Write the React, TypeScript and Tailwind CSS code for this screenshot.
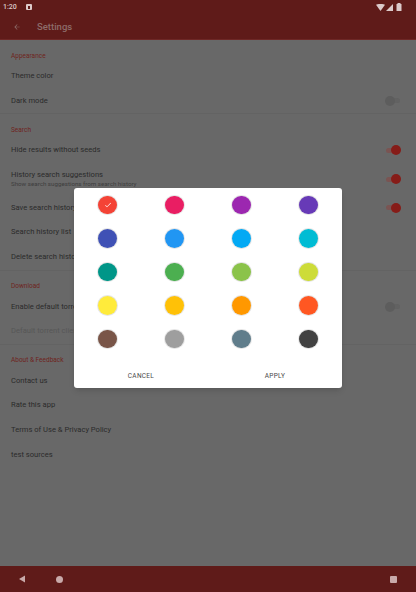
import React from "react";

type Row =
  | { kind: "header"; title: string }
  | { kind: "item"; title: string; summary?: string; toggle?: "on" | "off"; disabled?: boolean }
  | { kind: "divider" };

const rows: Row[] = [
  { kind: "header", title: "Appearance" },
  { kind: "item", title: "Theme color" },
  { kind: "item", title: "Dark mode", toggle: "off" },
  { kind: "divider" },
  { kind: "header", title: "Search" },
  { kind: "item", title: "Hide results without seeds", toggle: "on" },
  { kind: "item", title: "History search suggestions", summary: "Show search suggestions from search history", toggle: "on" },
  { kind: "item", title: "Save search history", toggle: "on" },
  { kind: "item", title: "Search history list" },
  { kind: "item", title: "Delete search history" },
  { kind: "divider" },
  { kind: "header", title: "Download" },
  { kind: "item", title: "Enable default torrent client", toggle: "off" },
  { kind: "item", title: "Default torrent client", disabled: true },
  { kind: "divider" },
  { kind: "header", title: "About & Feedback" },
  { kind: "item", title: "Contact us" },
  { kind: "item", title: "Rate this app" },
  { kind: "item", title: "Terms of Use & Privacy Policy" },
  { kind: "item", title: "test sources" },
];

const colors = [
  "#F44336", "#E91E63", "#9C27B0", "#673AB7",
  "#3F51B5", "#2196F3", "#03A9F4", "#00BCD4",
  "#009688", "#4CAF50", "#8BC34A", "#CDDC39",
  "#FFEB3B", "#FFC107", "#FF9800", "#FF5722",
  "#795548", "#9E9E9E", "#607D8B", "#424242",
];

function Toggle({ on }: { on: boolean }) {
  return (
    <div className="relative w-[16px] h-[10px] flex items-center">
      <div className={`w-[14px] h-[5px] rounded-full ml-[1px] ${on ? "bg-[#7a5452]" : "bg-[#626262]"}`} />
      <div
        className={`absolute top-0 w-[10px] h-[10px] rounded-full ${
          on ? "right-0 bg-[#861c18]" : "left-0 bg-[#5d5d5d]"
        }`}
      />
    </div>
  );
}

function SettingsRow({ row }: { row: Row }) {
  if (row.kind === "divider") return <div className="h-px bg-[#636363]" />;
  if (row.kind === "header")
    return (
      <div className="h-[23.7px] pt-[10.5px] pl-[11px] text-[6.5px] leading-[10px] text-[#6f2420]">
        {row.title}
      </div>
    );
  return (
    <div className={`flex items-center pl-[11px] pr-[15px] ${row.summary ? "h-[33px] pt-[1px]" : "h-[24.7px]"}`}>
      <div className="flex-1">
        <div className={`text-[7.6px] leading-[10px] ${row.disabled ? "text-[#575757]" : "text-[#2b2b2b]"}`}>
          {row.title}
        </div>
        {row.summary && <div className="text-[6.2px] leading-[8px] text-[#3d3d3d]">{row.summary}</div>}
      </div>
      {row.toggle && <Toggle on={row.toggle === "on"} />}
    </div>
  );
}

export default function App() {
  return (
    <div className="relative w-[416px] h-[592px] flex flex-col bg-[#686868] overflow-hidden" style={{ fontFamily: "Roboto, 'Noto Sans', sans-serif" }}>
      <div className="bg-[#5f1b19]">
        <div className="h-[14px] flex items-center px-[3px] text-[#dccaca]">
          <span className="text-[7px] font-medium leading-none">1:20</span>
          <div className="ml-[9px] w-[6px] h-[6px] rounded-[1px] bg-[#dccaca] flex items-center justify-center">
            <div className="w-[2px] h-[3px] bg-[#5f1b19]" />
          </div>
          <div className="flex-1" />
          <div className="flex items-center gap-[1px] mr-[11px]">
            <svg width="9" height="7" viewBox="0 0 9 7"><path d="M0 0.8 Q4.5 -1 9 0.8 L4.5 7 Z" fill="#dccaca" /></svg>
            <svg width="7" height="7" viewBox="0 0 7 7"><path d="M7 0 L7 7 L0 7 Z" fill="#dccaca" /></svg>
            <svg width="6" height="8" viewBox="0 0 6 8" className="ml-[2px]"><path d="M1.5 0 h3 v1 h1 v7 h-5 v-7 h1 z" fill="#dccaca" /></svg>
          </div>
        </div>
        <div className="h-[26px] pt-[1px] flex items-center border-b border-[#6e2826]">
          <svg width="8" height="8" viewBox="0 0 24 24" className="ml-[13px]">
            <path d="M20 11H7.83l5.59-5.59L12 4l-8 8 8 8 1.41-1.41L7.83 13H20v-2z" fill="#8d6b69" />
          </svg>
          <span className="ml-[16px] text-[9.5px] font-medium text-[#8d6b69]">Settings</span>
        </div>
      </div>

      <div className="flex-1 flex flex-col">
        {rows.map((r, i) => (
          <SettingsRow key={i} row={r} />
        ))}
      </div>

      <div className="h-[26px] bg-[#5f1b19] flex items-center">
        <svg width="8" height="8" viewBox="0 0 8 8" className="ml-[18px]"><path d="M7 0.5 L7 7.5 L1 4 Z" fill="#c9aaaa" /></svg>
        <div className="ml-[30px] w-[7px] h-[7px] rounded-full bg-[#c9aaaa]" />
        <div className="flex-1" />
        <div className="mr-[19px] w-[7px] h-[7px] rounded-[1px] bg-[#c9aaaa]" />
      </div>

      <div className="absolute left-[74px] top-[188px] w-[268px] h-[200px] bg-white rounded-[3px] shadow-md flex flex-col">
        <div className="grid grid-cols-4">
          {colors.map((c, i) => (
            <div key={c} className="h-[33.5px] flex items-center justify-center">
              <div
                className="w-[18.5px] h-[18.5px] rounded-full flex items-center justify-center ring-1 ring-black/10"
                style={{ backgroundColor: c }}
              >
                {i === 0 && (
                  <svg width="8" height="8" viewBox="0 0 24 24">
                    <path d="M9 16.2L4.8 12l-1.4 1.4L9 19 21 7l-1.4-1.4L9 16.2z" fill="#fff" />
                  </svg>
                )}
              </div>
            </div>
          ))}
        </div>
        <div className="flex-1" />
        <div className="h-[22px] grid grid-cols-2 text-[6.5px] tracking-[0.3px] text-[#4a4a4a]">
          <div className="flex items-center justify-center">CANCEL</div>
          <div className="flex items-center justify-center">APPLY</div>
        </div>
      </div>
    </div>
  );
}
